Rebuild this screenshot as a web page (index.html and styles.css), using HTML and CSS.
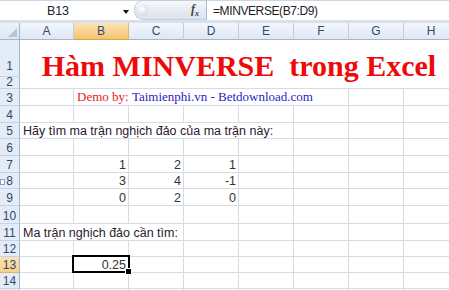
FILE: index.html
```html
<!DOCTYPE html>
<html lang="vi">
<head>
    <meta charset="UTF-8">
    <title>Hàm MINVERSE trong Excel</title>
    <link rel="stylesheet" href="styles.css">
</head>
<body>

    <!-- Thanh công thức -->
    <div class="formula-bar">
        <div class="name-box">
            <span class="name-text">B13</span>
            <span class="name-arrow"></span>
        </div>
        <div class="fx-box">
            <span class="fx-dimple"></span>
            <span class="fx-text">f<sub>x</sub></span>
        </div>
        <div class="formula-input">=MINVERSE(B7:D9)</div>
    </div>
    <div class="band"></div>

    <!-- Bảng tính -->
    <div class="sheet">
        <div class="corner"><span class="corner-tri"></span></div>
        <div class="col-head">A</div>
        <div class="col-head active">B</div>
        <div class="col-head">C</div>
        <div class="col-head">D</div>
        <div class="col-head">E</div>
        <div class="col-head">F</div>
        <div class="col-head">G</div>
        <div class="col-head">H</div>

        <!-- dòng 1-2: ô gộp tiêu đề -->
        <div class="row-head r1">1</div>
        <div class="cell title">Hàm MINVERSE&nbsp; trong Excel</div>
        <div class="row-head r2">2</div>

        <!-- dòng 3 -->
        <div class="row-head">3</div>
        <div class="cell"></div>
        <div class="cell demo span5"><span class="demo-red">Demo by:</span>&nbsp;<span class="demo-blue">Taimienphi.vn - Betdownload.com</span></div>
        <div class="cell"></div>
        <div class="cell"></div>

        <!-- dòng 4 -->
        <div class="row-head">4</div>
        <div class="cell"></div><div class="cell"></div><div class="cell"></div><div class="cell"></div>
        <div class="cell"></div><div class="cell"></div><div class="cell"></div><div class="cell"></div>

        <!-- dòng 5 -->
        <div class="row-head">5</div>
        <div class="cell text span5">Hãy tìm ma trận nghịch đảo của ma trận này:</div>
        <div class="cell"></div><div class="cell"></div><div class="cell"></div>

        <!-- dòng 6 -->
        <div class="row-head">6</div>
        <div class="cell"></div><div class="cell"></div><div class="cell"></div><div class="cell"></div>
        <div class="cell"></div><div class="cell"></div><div class="cell"></div><div class="cell"></div>

        <!-- dòng 7-9: ma trận -->
        <div class="row-head">7</div>
        <div class="cell"></div>
        <div class="cell num">1</div><div class="cell num">2</div><div class="cell num">1</div>
        <div class="cell"></div><div class="cell"></div><div class="cell"></div><div class="cell"></div>

        <div class="row-head"><span class="mark"></span>8</div>
        <div class="cell"></div>
        <div class="cell num">3</div><div class="cell num">4</div><div class="cell num">-1</div>
        <div class="cell"></div><div class="cell"></div><div class="cell"></div><div class="cell"></div>

        <div class="row-head">9</div>
        <div class="cell"></div>
        <div class="cell num">0</div><div class="cell num">2</div><div class="cell num">0</div>
        <div class="cell"></div><div class="cell"></div><div class="cell"></div><div class="cell"></div>

        <!-- dòng 10 -->
        <div class="row-head">10</div>
        <div class="cell"></div><div class="cell"></div><div class="cell"></div><div class="cell"></div>
        <div class="cell"></div><div class="cell"></div><div class="cell"></div><div class="cell"></div>

        <!-- dòng 11 -->
        <div class="row-head">11</div>
        <div class="cell text span3">Ma trận nghịch đảo cần tìm:</div>
        <div class="cell"></div><div class="cell"></div><div class="cell"></div><div class="cell"></div><div class="cell"></div>

        <!-- dòng 12 -->
        <div class="row-head">12</div>
        <div class="cell"></div><div class="cell"></div><div class="cell"></div><div class="cell"></div>
        <div class="cell"></div><div class="cell"></div><div class="cell"></div><div class="cell"></div>

        <!-- dòng 13: ô đang chọn -->
        <div class="row-head active">13</div>
        <div class="cell"></div>
        <div class="cell num selected">0.25</div>
        <div class="cell"></div><div class="cell"></div><div class="cell"></div>
        <div class="cell"></div><div class="cell"></div><div class="cell"></div>

        <!-- dòng 14 -->
        <div class="row-head">14</div>
        <div class="cell"></div><div class="cell"></div><div class="cell"></div><div class="cell"></div>
        <div class="cell"></div><div class="cell"></div><div class="cell"></div><div class="cell"></div>

        <!-- dòng 15: chỉ thấy mép trên -->
        <div class="row-head"></div>
        <div class="cell"></div><div class="cell"></div><div class="cell"></div><div class="cell"></div>
        <div class="cell"></div><div class="cell"></div><div class="cell"></div><div class="cell"></div>
    </div>

</body>
</html>
```

FILE: styles.css
```css
body {
    margin: 0;
    width: 449px;
    height: 290px;
    overflow: hidden;
    background: #ffffff;
    font-family: 'Liberation Sans', Arial, sans-serif;
}

/* Thanh công thức */
.formula-bar {
    display: flex;
    height: 20px;
    background: #ffffff;
    border-top: 1px solid #c9d6e6;
    box-sizing: border-box;
}

.name-box {
    width: 134px;
    display: flex;
    align-items: center;
    position: relative;
}

.name-text {
    margin-left: 47px;
    font-size: 12.5px;
    letter-spacing: -0.2px;
    color: #222;
}

.name-arrow {
    position: absolute;
    left: 123px;
    top: 9px;
    border-left: 3.5px solid transparent;
    border-right: 3.5px solid transparent;
    border-top: 4px solid #111;
}

.fx-box {
    width: 73px;
    display: flex;
    align-items: center;
    justify-content: space-between;
    border-radius: 9px 0 0 9px;
    background: linear-gradient(#f6f8fb, #e6ebf2 55%, #dbe2ec);
    border: 1px solid #c4cfdd;
    border-right-color: #a9b8cc;
    box-sizing: border-box;
    margin-top: -1px;
    height: 20px;
}

.fx-dimple {
    width: 10px;
    height: 12px;
    margin-left: 3px;
    border-radius: 50%;
    background: radial-gradient(circle at 40% 40%, #ffffff, #c7d1de);
}

.fx-text {
    font-family: 'Liberation Serif', serif;
    font-style: italic;
    font-weight: bold;
    font-size: 12px;
    color: #444;
    margin-right: 7px;
}

.fx-text sub {
    font-size: 8px;
}

.formula-input {
    flex: 1;
    padding-left: 6px;
    display: flex;
    align-items: center;
    font-size: 12px;
    letter-spacing: -0.4px;
    color: #222;
}

.band {
    height: 3px;
    background: #d7e0ec;
}

/* Lưới bảng tính */
.sheet {
    display: grid;
    grid-template-columns: 20px 54px repeat(7, 55px);
    grid-template-rows: 17px 37px 12px 17px 17px 16px 17px 17px 16px 17px 18px 17px 16px 16px 16px 20px;
}

.corner, .col-head, .row-head {
    box-sizing: border-box;
    color: #2f4a6d;
    font-size: 12px;
}

.corner {
    position: relative;
    background: linear-gradient(#edf2f9, #dde6f2);
    border-right: 1px solid #9eb6ce;
    border-bottom: 1px solid #9eb6ce;
}

.corner-tri {
    position: absolute;
    right: 2px;
    bottom: 2px;
    border-left: 9px solid transparent;
    border-bottom: 9px solid #b7c6d9;
}

.col-head {
    display: flex;
    align-items: center;
    justify-content: center;
    background: linear-gradient(#f4f7fc, #e9eff8 50%, #dfe7f3);
    border-right: 1px solid #c0cee0;
    border-bottom: 1px solid #9eb6ce;
}

.col-head.active {
    background: linear-gradient(#fbe3b5, #f8d494 50%, #f3c46f);
    border-right-color: #e0b46a;
    border-bottom-color: #d8a447;
}

.row-head {
    grid-column: 1;
    position: relative;
    display: flex;
    align-items: flex-end;
    justify-content: center;
    line-height: 14px;
    background: #e4ecf7;
    border-right: 1px solid #9eb6ce;
    border-bottom: 1px solid #c5d3e4;
}

.row-head.r1 {
    padding-bottom: 3px;
}

.row-head.r2 {
    line-height: 11px;
}

.row-head.active {
    background: linear-gradient(#fbe3b5, #f6cf87);
    border-bottom-color: #dfb366;
}

/* dấu nhỏ ở dòng 8 */
.mark {
    position: absolute;
    left: 0;
    top: 6px;
    width: 3px;
    height: 4px;
    border: 1px solid #8aa0bd;
    background: #ffffff;
}

.cell {
    box-sizing: border-box;
    display: flex;
    align-items: flex-end;
    border-right: 1px solid #d5dce8;
    border-bottom: 1px solid #d5dce8;
    font-size: 12.5px;
    line-height: 14px;
    padding: 0 2px 0 3px;
    white-space: nowrap;
    color: #2a1a30;
}

.span3 { grid-column: span 3; }
.span5 { grid-column: span 5; }

.num {
    justify-content: flex-end;
    color: #333333;
}

.title {
    grid-column: span 8;
    grid-row: span 2;
    align-items: center;
    justify-content: center;
    padding-top: 3px;
    font-family: 'Liberation Serif', 'Times New Roman', serif;
    font-weight: bold;
    font-size: 30px;
    line-height: 34px;
    color: #ee0a0a;
    padding-left: 0;
    padding-right: 0;
}

.demo {
    font-family: 'Liberation Serif', 'Times New Roman', serif;
    font-size: 13px;
    padding-bottom: 1px;
}

.demo-red {
    color: #e31b1b;
}

.demo-blue {
    color: #2a22c8;
}

/* Ô được chọn B13 */
.selected {
    position: relative;
}

.selected::after {
    content: "";
    position: absolute;
    left: -2px;
    top: -2px;
    right: -2px;
    bottom: -1px;
    border: 2px solid #000000;
}

.selected::before {
    content: "";
    position: absolute;
    right: -4px;
    bottom: -3px;
    width: 5px;
    height: 5px;
    background: #000000;
    border: 1px solid #ffffff;
    z-index: 1;
}
```
